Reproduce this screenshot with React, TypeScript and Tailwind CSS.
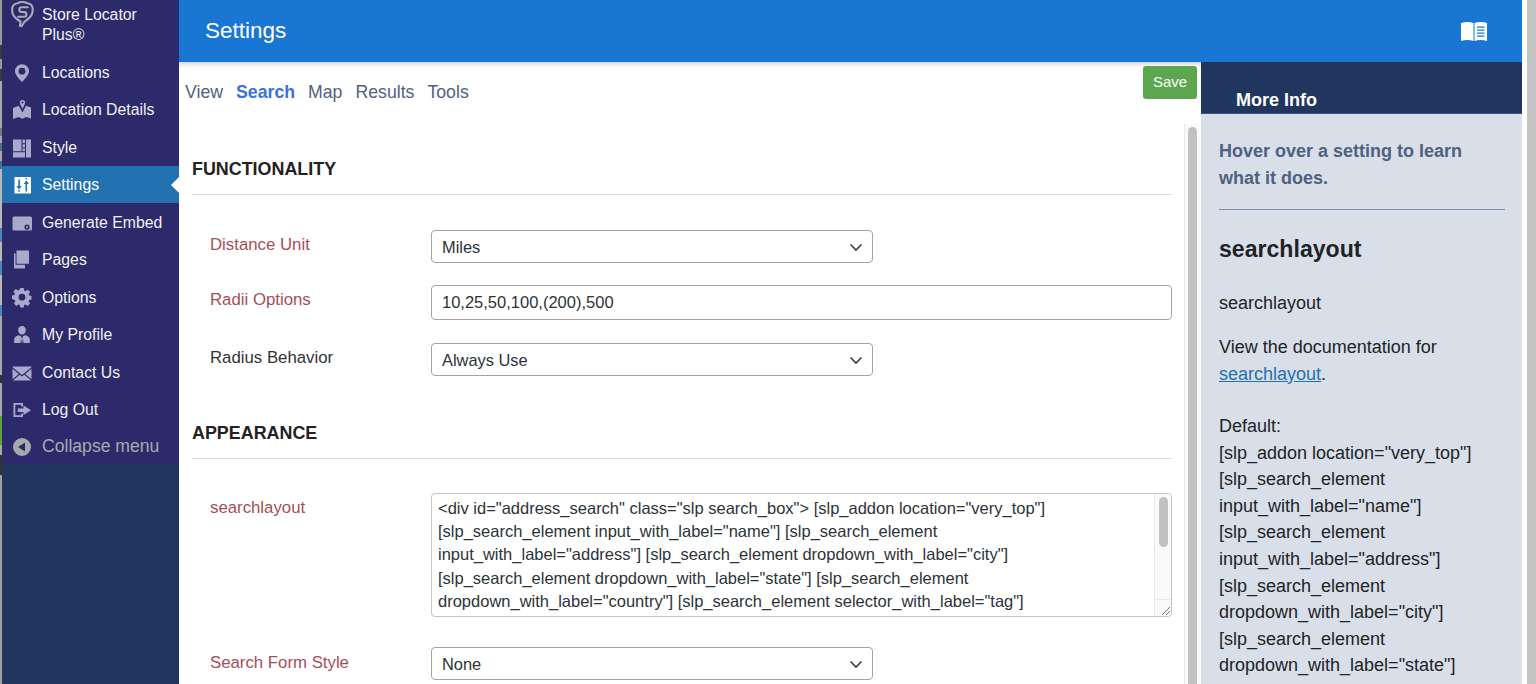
import React from "react";

const Ic = ({ children }: { children: React.ReactNode }) => (
  <svg viewBox="0 0 20 20" className="w-5 h-5 shrink-0" fill="currentColor">{children}</svg>
);

const icons: Record<string, React.ReactNode> = {
  pin: <path fillRule="evenodd" d="M10 1.200a7 7 0 0 0-7 7c0 3.600 4.600 8.400 7 10.800 2.400-2.400 7-7.200 7-10.800a7 7 0 0 0-7-7zm0 3.600a3.400 3.400 0 1 1 0 6.800 3.400 3.400 0 0 1 0-6.800z" />,
  map: <path fillRule="evenodd" d="M10.500 0a2.600 2.600 0 0 0-2.600 2.600c0 1.600 1.600 4.400 2.600 6.400 1-2 2.600-4.800 2.600-6.400A2.600 2.600 0 0 0 10.500 0zm0 1.600a1 1 0 1 1 0 2 1 1 0 0 1 0-2zM1 8l5.800-2.300 3.700 6.800 3.500-6.800L19 7.500v11l-4.800-1.600-4 1.800-3.600-1.800L1 19z" />,
  style: <path d="M1 1.500h8.500v11.800H1zM10.500 1.500H13v3.700h-2.500zM10.500 6.200H13v3.200h-2.500zM10.500 10.400H13v2.900h-2.500zM14 1.500h5v18h-5zM1 14.300h12v5.200H1z" />,
  settings: <path fillRule="evenodd" d="M2.500 2H19v16.500H2.500zM6.300 4.500v6.500H4.500L7 14.800 9.500 11H7.900V4.500zM6.200 15.300v1.400h1.700v-1.400zM13.500 16.500h1.600v-7.500h1.800L14.300 5.200 11.700 9h1.800zM13.500 2.900v1.400h1.600V2.900z" />,
  embed: <path fillRule="evenodd" d="M2 3.500h16.500A1.500 1.500 0 0 1 20 5v11a1.500 1.500 0 0 1-1.500 1.500H2A1.500 1.500 0 0 1 .5 16V5A1.500 1.500 0 0 1 2 3.500zm13 8a2.600 2.600 0 1 0 0 5.200 2.600 2.600 0 0 0 0-5.200zm0 1.500a1.100 1.100 0 1 1 0 2.200 1.100 1.100 0 0 1 0-2.200z" />,
  pages: <path d="M4.500.500H17v13.200H4.500zM2 3.500h1.600v11.200h9.400v3.800H2z" />,
  gear: <path fillRule="evenodd" d="M8.300 0h3.400l.5 2.600 1.300.6 2.200-1.500 2.400 2.400-1.500 2.200.6 1.300 2.300.5v3.400l-2.300.5-.6 1.300 1.500 2.200-2.400 2.400-2.200-1.500-1.300.6-.5 2.500H8.300l-.5-2.500-1.300-.6-2.200 1.500-2.400-2.400 1.500-2.200-.6-1.300L0 10.900V7.500l2.300-.5.6-1.300-1.500-2.200 2.400-2.400 2.200 1.500 1.300-.6zM10 5.800a3.400 3.400 0 1 0 0 6.800 3.400 3.400 0 0 0 0-6.800z" />,
  user: <path d="M10 1a3.900 3.900 0 0 1 3.900 4c0 2.400-1.700 4.600-3.900 4.600S6.100 7.400 6.100 5A3.900 3.900 0 0 1 10 1zM7 10.300l2.200 1.200-.7 6.500H2.200v-4c0-1.800 2-3.100 4.800-3.700zM13 10.300c2.800.6 4.800 1.900 4.800 3.700v4h-6.300l-.7-6.500zM10 12l.9 1-.5 4.500h-.8L9.100 13z" />,
  mail: <path d="M.5 3.500h19v.8L10 12 .5 4.300zM.5 5.800l6.300 5.100-6.300 5.300zM19.500 5.800v10.400l-6.300-5.300zM7.700 11.700 10 13.500l2.300-1.800 6.800 5.800H.9z" />,
  logout: <path d="M1.500 3h9.500v3.500H9.200V4.800H3.300v10.400h5.900v-1.700H11V17H1.500zM11.500 5.500l7.500 4.700-7.500 4.800v-3H5.800V8.500h5.700z" />,
  collapse: <path fillRule="evenodd" d="M10 1a9 9 0 1 1 0 18 9 9 0 0 1 0-18zm3 4.500L6 10l7 4.500z" />,
};

const menu = [
  ["pin", "Locations"], ["map", "Location Details"], ["style", "Style"], ["settings", "Settings"],
  ["embed", "Generate Embed"], ["pages", "Pages"], ["gear", "Options"], ["user", "My Profile"], ["mail", "Contact Us"], ["logout", "Log Out"],
];

const strip: [number, string][] = [
  [46, "#9a9a9a"], [14, "#3a3a3a"], [10, "#9a9a9a"], [12, "#3a3a3a"], [48, "#a8a8a8"], [8, "#777777"], [8, "#a8a8a8"], [8, "#4d6f8f"], [10, "#a8a8a8"], [8, "#4d6f8f"],
  [60, "#b8b8b8"], [14, "#4d86b8"], [20, "#b8b8b8"], [14, "#4d86b8"], [30, "#b8b8b8"], [12, "#4d86b8"], [60, "#a8a8a8"], [8, "#333333"], [33, "#a8a8a8"], [30, "#5ea33d"], [10, "#a8a8a8"], [20, "#333333"], [213, "#a0a0a0"],
];

const Sidebar = () => (
  <aside className="w-[177px] shrink-0 bg-[#20365f] flex flex-col">
    <div className="bg-[#2c2a6b] pb-[1px]">
      <div className="flex h-[53px] pl-[9px] pt-[1px] text-[#f0f0f1]">
        <svg viewBox="0 0 24 28" className="w-[23px] h-[27px] shrink-0 text-[#a9a9ba]" fill="none" stroke="currentColor" strokeWidth="2.200" strokeLinecap="round" strokeLinejoin="round">
          <path d="M7 2.200C9.500.800 14 .800 16.500 2c3 .4 5.500 2 6 5 .5 4-.7 8-3.500 10.500-2 1.800-4 3-5.500 4.800l-2.500 4-1.800-.5 .8-4.500C6 19 3 16.500 1.800 13 .8 9.500 1 6 3 3.800 4.200 2.800 5.500 2.500 7 2.200z" />
          <path d="M17.500 6.500h-6.300c-3.200 0-3.400 4.500-.2 4.800l3 .2c3 .3 2.800 4.800-.3 4.800H7.500" />
        </svg>
        <span className="ml-[8px] mt-[4px] text-[15.800px] leading-[20px] w-[110px]">Store Locator Plus®</span>
      </div>
      {menu.map(([icon, label]) => {
        const active = label === "Settings";
        return (
          <div key={label} className={`relative flex items-center h-[37.500px] pl-[10px] pt-[2px] text-[15.800px] ${active ? "bg-[#2271b1] text-white" : "text-[#f0f0f1]"}`}>
            <span className={active ? "text-white" : "text-[#a7aacb]"}><Ic>{icons[icon]}</Ic></span>
            <span className="ml-[10px]">{label}</span>
            {active && <span className="absolute right-0 top-[11px] w-0 h-0 border-y-[8px] border-y-transparent border-r-[8px] border-r-white" />}
          </div>
        );
      })}
      <div className="flex items-center h-[36px] pl-[10px] pt-[1px] text-[#a7aaad]">
        <Ic>{icons.collapse}</Ic>
        <span className="ml-[10px] text-[17.600px]">Collapse menu</span>
      </div>
    </div>
  </aside>
);

const labelCls = "w-[239px] shrink-0 pl-[18px] text-[16.800px] text-[#a54f58]";
const selectCls = "w-[442px] h-[33px] border border-[#a3a3a3] rounded-[4px] bg-white flex items-center justify-between pl-[10px] pr-[8px] text-[16.400px] text-[#2c3338]";

const Select = ({ value }: { value: string }) => (
  <div className={selectCls}>
    <span className="pt-[1px]">{value}</span>
    <svg viewBox="0 0 16 16" className="w-4 h-4 text-[#3c434a]" fill="none" stroke="currentColor" strokeWidth="1.700"><path d="M2.500 5.500 8 11l5.500-5.500" /></svg>
  </div>
);

const headingCls = "font-bold text-[17.900px] leading-[24px] text-[#222222] border-b border-[#dcdcde]";

const Main = () => (
  <main className="relative flex-1 min-w-0 bg-white flex flex-col shadow-[inset_0_6px_6px_-5px_rgba(0,0,0,0.25)]">
    <div className="flex gap-[13px] pl-[6px] pt-[19px] h-[62px] text-[17.700px] leading-[22px] text-[#4f6180]">
      <span>View</span><span className="font-bold text-[#3b72db]">Search</span><span>Map</span><span>Results</span><span>Tools</span>
    </div>
    <div className="absolute right-[4px] top-[4px] w-[54px] h-[33px] rounded-[3px] bg-[#5ca64f] text-white text-[15px] flex items-center justify-center">Save</div>
    <div className="flex-1 flex min-h-0">
      <div className="w-[1005px] pl-[13px] pr-[12px] shrink-0">
        <div className="pt-[33px]"><h2 className={`${headingCls} pb-[13px]`}>FUNCTIONALITY</h2></div>
        <div className="flex items-center mt-[35px]"><span className={`${labelCls} pb-[4px]`}>Distance Unit</span><Select value="Miles" /></div>
        <div className="flex items-center mt-[22px]"><span className={`${labelCls} pb-[6px]`}>Radii Options</span>
          <div className="flex-1 h-[35px] border border-[#a3a3a3] rounded-[4px] pl-[10px] flex items-center text-[16.500px] text-[#2c3338]">10,25,50,100,(200),500</div>
        </div>
        <div className="flex items-center mt-[23px]"><span className="w-[239px] shrink-0 pl-[18px] pb-[4px] text-[16.800px] text-[#333333]">Radius Behavior</span><Select value="Always Use" /></div>
        <div className="pt-[45px]"><h2 className={`${headingCls} pb-[13px]`}>APPEARANCE</h2></div>
        <div className="flex mt-[34px]">
          <span className={`${labelCls} pt-[2px]`}>searchlayout</span>
          <div className="relative flex-1 h-[124px] border border-[#c3c4c7] rounded-[4px] overflow-hidden flex">
            <div className="flex-1 pl-[6px] pt-[3px] pr-[24px] text-[16.500px] leading-[23.200px] text-[#2c3338]">
              &lt;div id="address_search" class="slp search_box"&gt; [slp_addon location="very_top"] [slp_search_element input_with_label="name"] [slp_search_element input_with_label="address"] [slp_search_element dropdown_with_label="city"] [slp_search_element dropdown_with_label="state"] [slp_search_element dropdown_with_label="country"] [slp_search_element selector_with_label="tag"]
            </div>
            <div className="w-[17px] shrink-0 bg-[#fafafa] border-l border-[#e8e8e8] flex flex-col items-center pt-[3px]">
              <div className="w-[9px] h-[50px] rounded-full bg-[#c1c1c1]" />
              <div className="mt-auto h-[17px] w-full border-t border-[#e8e8e8] relative">
                <svg viewBox="0 0 16 16" className="w-4 h-4" stroke="#777" strokeWidth="1"><path d="M7 15 15 7M11 15l4-4" /></svg>
              </div>
            </div>
          </div>
        </div>
        <div className="flex items-center mt-[30px]"><span className={`${labelCls} pb-[2px]`}>Search Form Style</span><Select value="None" /></div>
      </div>
      <div className="w-[16px] shrink-0 bg-[#fafafa] border-l border-[#e8e8e8] flex justify-center pt-[3px]">
        <div className="w-[9px] h-full rounded-t-full bg-[#c1c1c1]" />
      </div>
    </div>
  </main>
);

const Info = () => (
  <aside className="w-[321px] shrink-0 bg-[#d9dfe8] flex flex-col">
    <div className="h-[52px] bg-[#20365f] pl-[35px] pt-[27px] text-white font-bold text-[18px] leading-[22px] border-b border-[#3b5177]">More Info</div>
    <div className="pl-[18px] pr-[17px] pt-[24px] text-[18px] text-[#1d2327]">
      <p className="font-bold text-[18px] leading-[26.500px] text-[#4f6180] pb-[18px] border-b border-[#7f8fac]">Hover over a setting to learn what it does.</p>
      <h3 className="font-bold text-[23.100px] leading-[30px] mt-[24px]">searchlayout</h3>
      <p className="mt-[26px] leading-[26px]">searchlayout</p>
      <p className="mt-[18px] leading-[26.500px]">View the documentation for <span className="text-[#2271b1] underline">searchlayout</span>.</p>
      <p className="mt-[26px] leading-[26.600px]">Default:<br />[slp_addon location="very_top"]<br />[slp_search_element<br />input_with_label="name"]<br />[slp_search_element<br />input_with_label="address"]<br />[slp_search_element<br />dropdown_with_label="city"]<br />[slp_search_element<br />dropdown_with_label="state"]</p>
    </div>
  </aside>
);

export default function App() {
  return (
    <div className="w-[1536px] h-[684px] overflow-hidden flex bg-white font-['Liberation_Sans',Arial,sans-serif]">
      <div className="w-[2px] shrink-0 flex flex-col">
        {strip.map(([h, c], i) => <div key={i} style={{ height: h, backgroundColor: c }} />)}
      </div>
      <Sidebar />
      <div className="flex-1 min-w-0 flex flex-col">
        <header className="h-[62px] shrink-0 bg-[#1976d2] flex items-center justify-between pl-[26px] pr-[35px] text-white text-[22.500px]">
          <span>Settings</span>
          <svg viewBox="0 0 26 20" className="w-[26px] h-[20px]" fill="white">
            <path fillRule="evenodd" d="M0 2c4-1.500 9-1.500 12.500 0v18C9 18.500 4 18.500 0 20zM13.500 2c3.500-1.500 8.500-1.500 12.500 0v18c-4-1.500-9-1.500-12.500 0zM16 5.500v1.300h7.500V5.500zM16 8.500v1.300h7.500V8.500zM16 11.500v1.300h7.500v-1.300zM16 14.500v1.300h7.500v-1.300z" />
          </svg>
        </header>
        <div className="flex-1 min-h-0 flex">
          <Main />
          <Info />
        </div>
      </div>
      <div className="w-[5px] shrink-0 bg-white" />
      <div className="w-[9px] shrink-0 bg-[#c4c4c4]" />
    </div>
  );
}
